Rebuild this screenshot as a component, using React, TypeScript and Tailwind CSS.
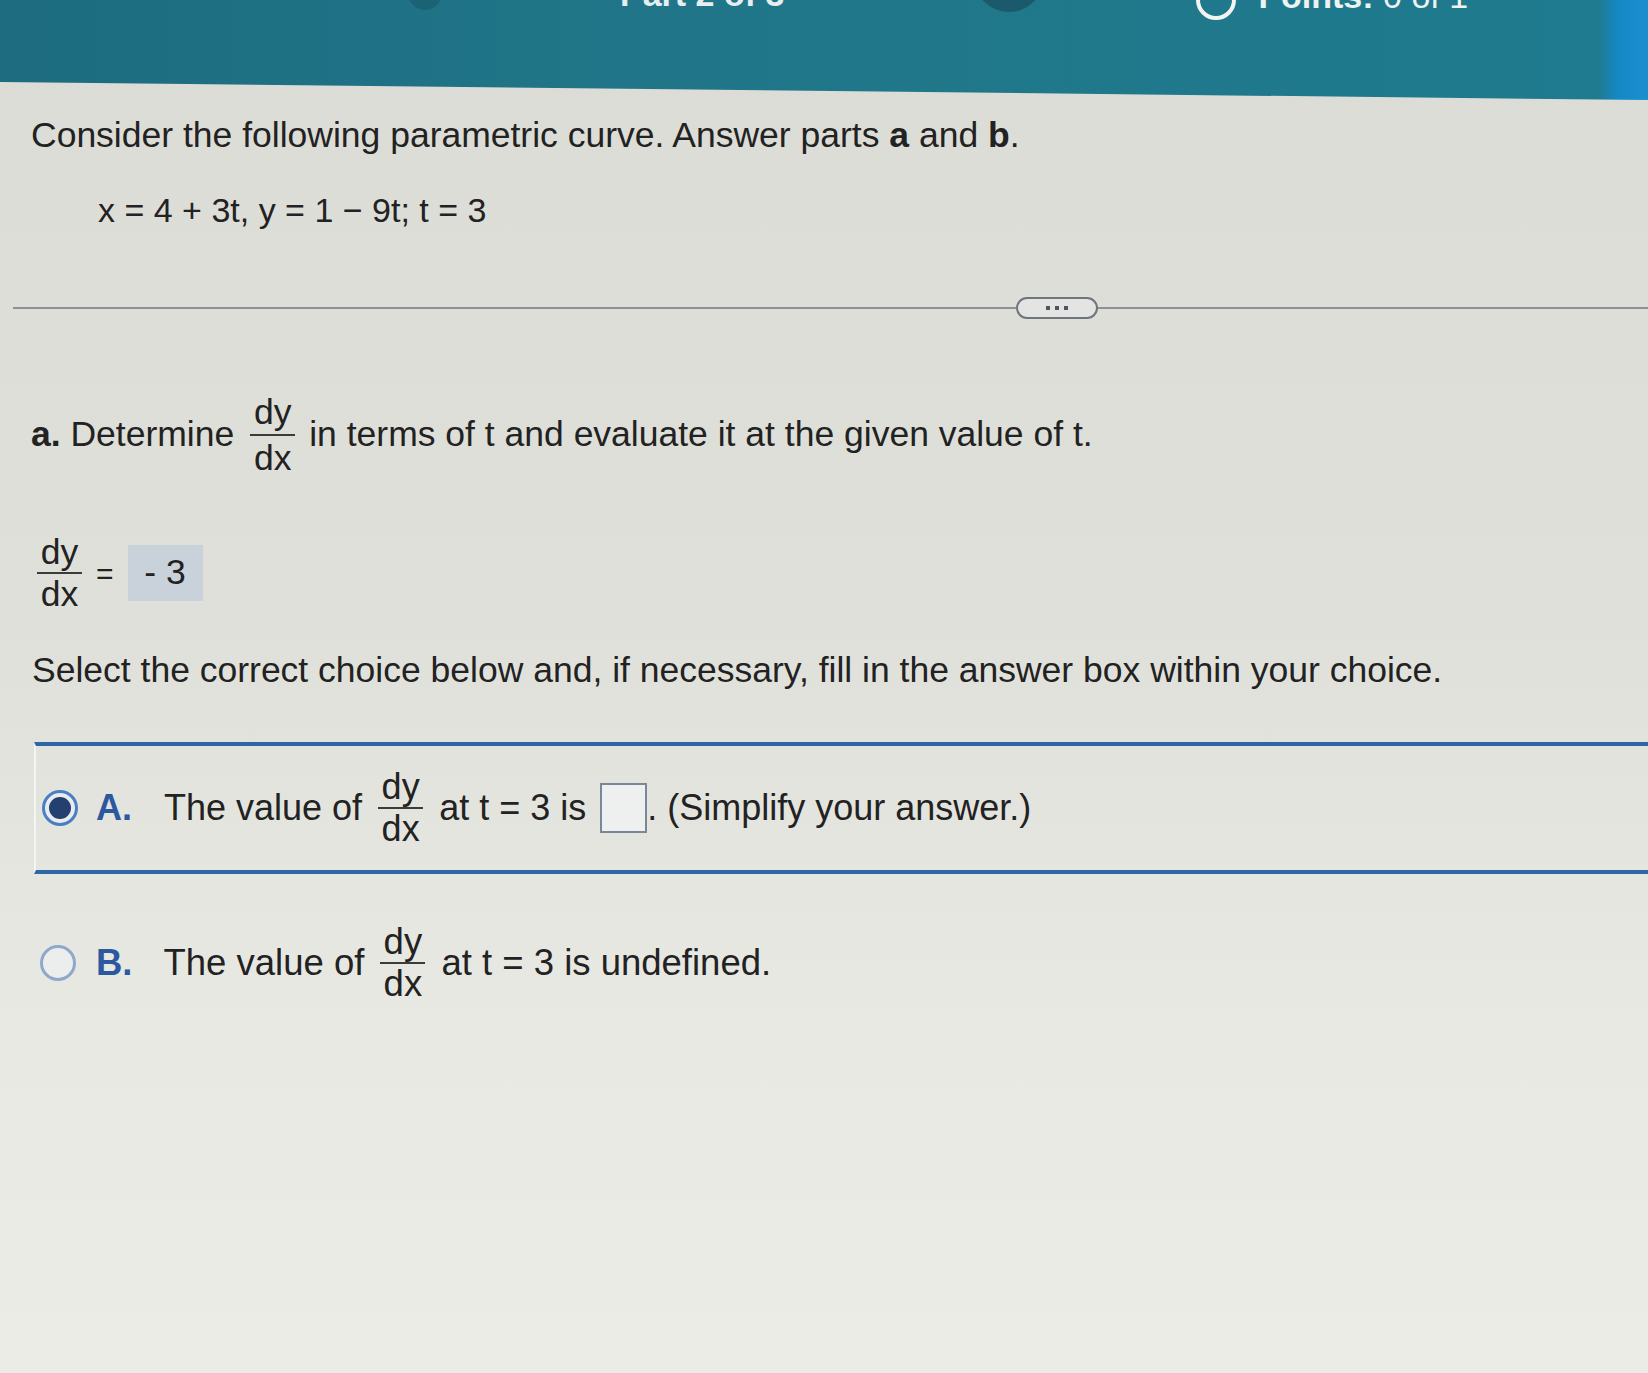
import React from "react";

function Frac({ className = "", lead = "leading-[40px]" }: { className?: string; lead?: string }) {
  return (
    <span className={"inline-flex flex-col items-center " + className}>
      <span className={lead}>dy</span>
      <span className="h-[2px] w-[45px] bg-[#3b3b3b]" />
      <span className={lead}>dx</span>
    </span>
  );
}

function Radio({ checked }: { checked?: boolean }) {
  if (checked) {
    return (
      <span className="flex h-[36px] w-[36px] items-center justify-center rounded-full border-[3px] border-[#4a7fc4] bg-[#e9ecef]">
        <span className="h-[22px] w-[22px] rounded-full bg-[#23406f]" />
      </span>
    );
  }
  return <span className="h-[36px] w-[36px] rounded-full border-[3px] border-[#8ea9cc] bg-[#eceeee]" />;
}

export default function App() {
  return (
    <div className="h-[1373px] w-[1648px] overflow-hidden bg-[linear-gradient(180deg,#dcdcd6_0%,#e0e0da_45%,#e9e9e4_75%,#ecece7_100%)] font-['Liberation_Sans',Arial,sans-serif] text-[35.5px] text-[#222222]">
      {/* top bar, mostly cut off by the photo */}
      <div className="flex h-[100px] items-start overflow-hidden bg-[linear-gradient(90deg,#1d6c80_0%,#207688_40%,#1f7a8d_90%,#1f7b90_97%,#1688c6_98.2%,#1a8fd0_100%)] [clip-path:polygon(0_0,100%_0,100%_100%,0_82%)]">
        <span className="ml-[408px] -mt-[24px] h-[34px] w-[34px] rounded-full bg-[#1c6275]" />
        <span className="ml-[178px] -mt-[26px] text-[34px] font-bold leading-[40px] text-[#e6eef0]">Part 2 of 3</span>
        <span className="ml-[190px] -mt-[58px] h-[70px] w-[70px] rounded-full bg-[#1b5a6c]" />
        <span className="ml-[152px] -mt-[20px] h-[40px] w-[40px] rounded-full border-[4px] border-[#f2f4f2]" />
        <span className="ml-[22px] -mt-[24px] text-[34px] leading-[40px] text-[#eef2f0]">
          <span className="font-bold">Points:</span> 0 of 1
        </span>
      </div>

      <div className="pl-[31px]">
        <p className="mt-[15px] leading-[40px]">
          Consider the following parametric curve. Answer parts <span className="font-bold">a</span> and{" "}
          <span className="font-bold">b</span>.
        </p>
        <p className="mt-[35px] pl-[67px] text-[34px] leading-[40px]">x = 4 + 3t, y = 1 − 9t; t = 3</p>
      </div>

      {/* divider with more-button */}
      <div className="mt-[67px] flex items-center pl-[13px]">
        <div className="h-[2px] w-[1003px] bg-[#8c9196]" />
        <div className="flex h-[22px] w-[82px] items-center justify-center gap-[5px] rounded-full border-2 border-[#6f757c] bg-[#e4e5e2]">
          <span className="h-[4px] w-[4px] bg-[#4b5563]" />
          <span className="h-[4px] w-[4px] bg-[#4b5563]" />
          <span className="h-[4px] w-[4px] bg-[#4b5563]" />
        </div>
        <div className="h-[2px] flex-1 bg-[#8c9196]" />
      </div>

      <div className="pl-[31px]">
        <div className="mt-[71px] flex items-center">
          <span>
            <span className="font-bold">a.</span> Determine
          </span>
          <Frac className="ml-[16px] mr-[14px]" lead="leading-[44px]" />
          <span>in terms of t and evaluate it at the given value of t.</span>
        </div>

        <div className="mt-[52px] flex items-center pl-[6px]">
          <Frac />
          <span className="ml-[14px] text-[30px]">=</span>
          <span className="ml-[14px] flex h-[56px] w-[75px] items-center justify-center bg-[#c9d2da]">- 3</span>
        </div>

        <p className="mt-[36px] pl-[1px] leading-[40px]">
          Select the correct choice below and, if necessary, fill in the answer box within your choice.
        </p>
      </div>

      {/* choice A, selected */}
      <div className="ml-[34px] mt-[52px] flex h-[132px] items-center border-y-[4px] border-l-2 border-y-[#2f67a6] border-l-[#f4f5f3] pl-[6px] text-[36px]">
        <Radio checked />
        <span className="ml-[18px] font-bold text-[#2c58a0]">A.</span>
        <span className="ml-[32px]">The value of</span>
        <Frac className="mx-[16px]" />
        <span>at t = 3 is</span>
        <span className="ml-[14px] h-[50px] w-[47px] border-2 border-[#7a8796] bg-[#eef0ef]" />
        <span>. (Simplify your answer.)</span>
      </div>

      {/* choice B */}
      <div className="ml-[40px] mt-[48px] flex items-center text-[36.5px]">
        <Radio />
        <span className="ml-[20px] font-bold text-[#2c58a0]">B.</span>
        <span className="ml-[31px]">The value of</span>
        <Frac className="mx-[16px]" />
        <span>at t = 3 is undefined.</span>
      </div>
    </div>
  );
}
